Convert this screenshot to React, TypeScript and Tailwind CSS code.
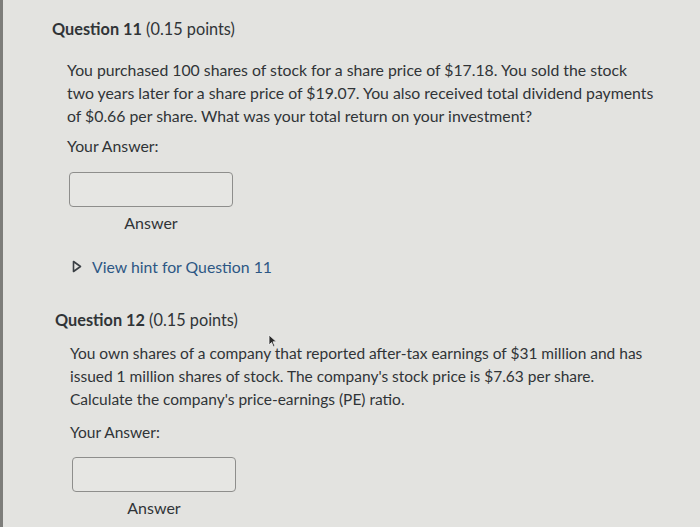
import React from 'react';

function AnswerBox() {
  return (
    <div className="w-[164px] flex flex-col items-center">
      <div className="w-[164px] h-[35px] rounded-[4px] border border-[#8e8e8c] bg-[#e6e6e3]" />
      <div className="mt-[4px] text-[16px] leading-[23px]">Answer</div>
    </div>
  );
}

function HintTriangle() {
  return (
    <svg width="10" height="13" viewBox="0 0 10 13" className="shrink-0">
      <path d="M1.5 1.5 L8.5 6.5 L1.5 11.5 Z" fill="none" stroke="#3a3f44" strokeWidth="1.6" strokeLinejoin="round" />
    </svg>
  );
}

export default function App() {
  return (
    <div
      className="relative min-h-screen w-[700px] h-[527px] overflow-hidden bg-[#e3e3e0] border-l-[3px] border-[#7d7d7a] text-[#303437]"
      style={{ fontFamily: 'Lato, "Open Sans", sans-serif' }}
    >
      {/* Question 11 */}
      <div className="pl-[49px] pt-[17px]">
        <h2 className="text-[16.3px] leading-[24px]">
          <span className="font-bold">Question 11</span> (0.15 points)
        </h2>
        <div className="pl-[15px] mt-[17px]">
          <p className="text-[15.8px] leading-[23px] whitespace-nowrap">
            You purchased 100 shares of stock for a share price of $17.18. You sold the stock
            <br />
            two years later for a share price of $19.07. You also received total dividend payments
            <br />
            of $0.66 per share. What was your total return on your investment?
          </p>
          <div className="mt-[7px] text-[15.8px] leading-[23px]">Your Answer:</div>
          <div className="mt-[15px] pl-[2px]">
            <AnswerBox />
          </div>
          <div className="mt-[21px] pl-[5px] flex items-center gap-[10px]">
            <HintTriangle />
            <span className="text-[15.8px] leading-[23px] text-[#2d5784]">View hint for Question 11</span>
          </div>
        </div>
      </div>

      {/* Question 12 */}
      <div className="pl-[52px] mt-[30px]">
        <h2 className="text-[16.3px] leading-[24px]">
          <span className="font-bold">Question 12</span> (0.15 points)
        </h2>
        <div className="pl-[15px] mt-[10px]">
          <p className="text-[15.5px] leading-[23px] whitespace-nowrap">
            You own shares of a company that reported after-tax earnings of $31 million and has
            <br />
            issued 1 million shares of stock. The company's stock price is $7.63 per share.
            <br />
            Calculate the company's price-earnings (PE) ratio.
          </p>
          <div className="mt-[10px] text-[15.5px] leading-[23px]">Your Answer:</div>
          <div className="mt-[13px] pl-[2px]">
            <AnswerBox />
          </div>
        </div>
      </div>

      {/* mouse cursor */}
      <svg width="10" height="14" viewBox="0 0 10 14" className="absolute left-[265px] top-[334px]">
        <path d="M1 1 L1 11 L3.5 8.5 L5.5 13 L7 12.3 L5 7.8 L8.5 7.8 Z" fill="#2a2a2a" stroke="#f2f2f2" strokeWidth="0.8" />
      </svg>
    </div>
  );
}
